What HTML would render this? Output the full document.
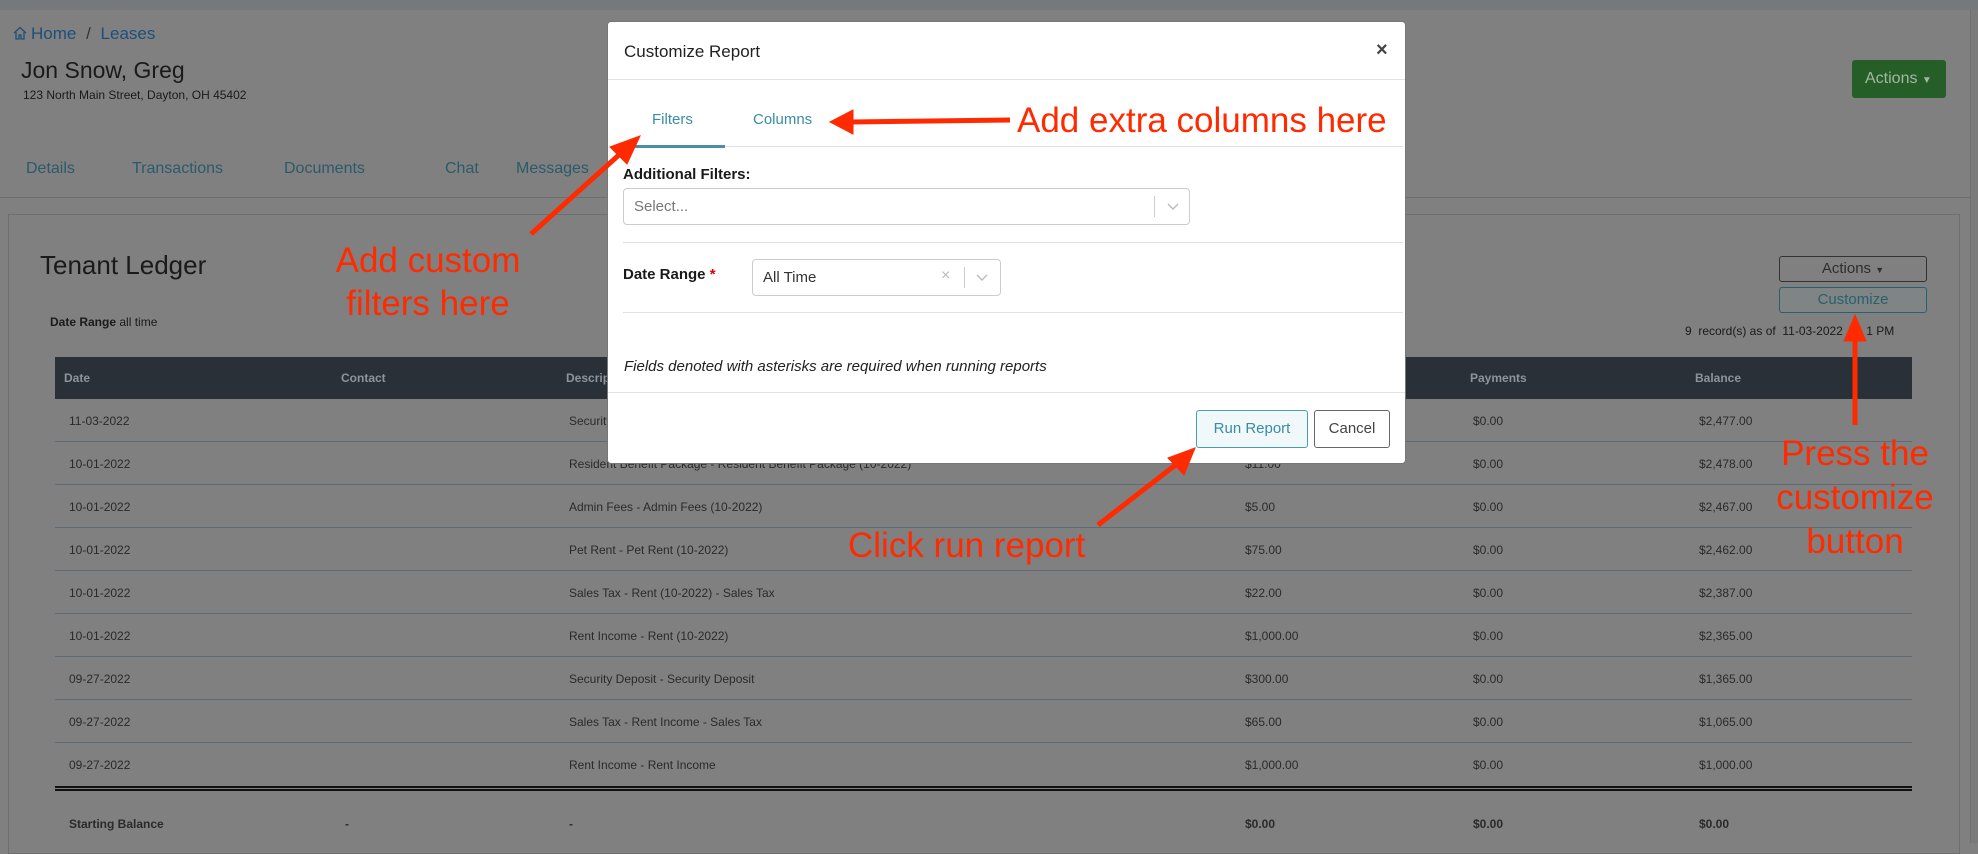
<!DOCTYPE html>
<html><head><meta charset="utf-8"><style>
*{margin:0;padding:0;box-sizing:border-box}
body{width:1978px;height:843px;overflow:hidden;background:#808080;font-family:"Liberation Sans",sans-serif;position:relative;color:#1e1e1e}
.a{position:absolute;white-space:nowrap}
.red{color:#ff2a00;font-size:35px;font-family:"Liberation Sans",sans-serif;line-height:1}
.row{position:absolute;left:55px;width:1857px;height:43px;border-bottom:1px solid #5f6b78;font-size:12px;color:#2a2a2a}
.row span{position:absolute;top:15px}
</style></head><body>
<div class="a" style="left:0;top:0;width:1978px;height:10px;background:#76797c"></div>
<div class="a" style="left:1970px;top:10px;width:8px;height:833px;background:#7a7a7a;border-left:1px solid #6f6f6f"></div>
<!-- breadcrumb -->
<svg class="a" style="left:13px;top:26px" width="14" height="14" viewBox="0 0 14 14"><path d="M1 7 L7 1.5 L13 7 M3 6 V13 H6 V9 H8 V13 H11 V6" fill="none" stroke="#1d4f7a" stroke-width="1.3"/></svg>
<div class="a" style="left:31px;top:24px;font-size:17px;color:#1d4f7a">Home <span style="color:#333;margin:0 5px">/</span> Leases</div>
<div class="a" style="left:21px;top:57px;font-size:23px;color:#1a1a1a">Jon Snow, Greg</div>
<div class="a" style="left:23px;top:88px;font-size:12px;color:#1a1a1a">123 North Main Street, Dayton, OH 45402</div>
<div class="a" style="left:1852px;top:60px;width:94px;height:38px;background:#265e28;border-radius:3px;color:#a3b8a3;font-size:16px;line-height:38px;padding-left:13px">Actions <span style="font-size:10px">▼</span></div>
<!-- tabs -->
<div class="a" style="left:26px;top:160px;font-size:16px;color:#2b5a6a">Details</div>
<div class="a" style="left:132px;top:160px;font-size:16px;color:#2b5a6a">Transactions</div>
<div class="a" style="left:284px;top:160px;font-size:16px;color:#2b5a6a">Documents</div>
<div class="a" style="left:445px;top:160px;font-size:16px;color:#2b5a6a">Chat</div>
<div class="a" style="left:516px;top:160px;font-size:16px;color:#2b5a6a">Messages</div>
<div class="a" style="left:0;top:197px;width:1970px;height:1px;background:#6e6e6e"></div>
<!-- card -->
<div class="a" style="left:8px;top:214px;width:1952px;height:640px;border:1px solid #6e6e6e"></div>
<div class="a" style="left:40px;top:250px;font-size:26px;color:#1a1a1a">Tenant Ledger</div>
<div class="a" style="left:50px;top:315px;font-size:12px;color:#1a1a1a"><b>Date Range</b> all time</div>
<div class="a" style="left:1779px;top:256px;width:148px;height:26px;border:1px solid #333;border-radius:3px;text-align:center;font-size:15px;line-height:24px;color:#2e2e2e">Actions <span style="font-size:9px">▼</span></div>
<div class="a" style="left:1779px;top:287px;width:148px;height:26px;border:1px solid #2a5f6e;border-radius:3px;text-align:center;font-size:15px;line-height:24px;color:#2a5f6e;background:#7f8485">Customize</div>
<div class="a" style="left:1685px;top:324px;font-size:12px;color:#1a1a1a">9&nbsp; record(s) as of&nbsp; 11-03-2022 &nbsp;&nbsp;&nbsp;&nbsp;&nbsp;&nbsp;1 PM</div>
<!-- table -->
<div class="a" style="left:55px;top:357px;width:1857px;height:42px;background:#2a3038;font-size:12px;font-weight:bold;color:#8d949c">
<span class="a" style="left:9px;top:14px">Date</span><span class="a" style="left:286px;top:14px">Contact</span><span class="a" style="left:511px;top:14px">Description</span><span class="a" style="left:1190px;top:14px">Charges</span><span class="a" style="left:1415px;top:14px">Payments</span><span class="a" style="left:1640px;top:14px">Balance</span></div>
<div class="row" style="top:399px"><span style="left:14px">11-03-2022</span><span style="left:514px">Security Deposit - Security Deposit</span><span style="left:1190px">$2,477.00</span><span style="left:1418px">$0.00</span><span style="left:1644px">$2,477.00</span></div>
<div class="row" style="top:442px"><span style="left:14px">10-01-2022</span><span style="left:514px">Resident Benefit Package - Resident Benefit Package (10-2022)</span><span style="left:1190px">$11.00</span><span style="left:1418px">$0.00</span><span style="left:1644px">$2,478.00</span></div>
<div class="row" style="top:485px"><span style="left:14px">10-01-2022</span><span style="left:514px">Admin Fees - Admin Fees (10-2022)</span><span style="left:1190px">$5.00</span><span style="left:1418px">$0.00</span><span style="left:1644px">$2,467.00</span></div>
<div class="row" style="top:528px"><span style="left:14px">10-01-2022</span><span style="left:514px">Pet Rent - Pet Rent (10-2022)</span><span style="left:1190px">$75.00</span><span style="left:1418px">$0.00</span><span style="left:1644px">$2,462.00</span></div>
<div class="row" style="top:571px"><span style="left:14px">10-01-2022</span><span style="left:514px">Sales Tax - Rent (10-2022) - Sales Tax</span><span style="left:1190px">$22.00</span><span style="left:1418px">$0.00</span><span style="left:1644px">$2,387.00</span></div>
<div class="row" style="top:614px"><span style="left:14px">10-01-2022</span><span style="left:514px">Rent Income - Rent (10-2022)</span><span style="left:1190px">$1,000.00</span><span style="left:1418px">$0.00</span><span style="left:1644px">$2,365.00</span></div>
<div class="row" style="top:657px"><span style="left:14px">09-27-2022</span><span style="left:514px">Security Deposit - Security Deposit</span><span style="left:1190px">$300.00</span><span style="left:1418px">$0.00</span><span style="left:1644px">$1,365.00</span></div>
<div class="row" style="top:700px"><span style="left:14px">09-27-2022</span><span style="left:514px">Sales Tax - Rent Income - Sales Tax</span><span style="left:1190px">$65.00</span><span style="left:1418px">$0.00</span><span style="left:1644px">$1,065.00</span></div>
<div class="row" style="top:743px;border-bottom:none"><span style="left:14px">09-27-2022</span><span style="left:514px">Rent Income - Rent Income</span><span style="left:1190px">$1,000.00</span><span style="left:1418px">$0.00</span><span style="left:1644px">$1,000.00</span></div>
<div class="a" style="left:55px;top:786px;width:1857px;height:5px;border-top:2px solid #111;border-bottom:2px solid #111"></div>
<div class="a" style="left:55px;top:817px;width:1857px;font-size:12px;font-weight:bold;color:#2a2a2a">
<span class="a" style="left:14px">Starting Balance</span><span class="a" style="left:290px">-</span><span class="a" style="left:514px">-</span><span class="a" style="left:1190px">$0.00</span><span class="a" style="left:1418px">$0.00</span><span class="a" style="left:1644px">$0.00</span></div>
<!-- modal -->
<div class="a" style="left:607px;top:21px;width:799px;height:443px;background:#fff;border-radius:4px;border:1px solid #777">
<div class="a" style="left:16px;top:20px;font-size:17px;color:#222">Customize Report</div>
<div class="a" style="left:768px;top:17px;font-size:20px;font-weight:bold;color:#444">×</div>
<div class="a" style="left:0;top:57px;width:797px;height:1px;background:#e2e2e2"></div>
<div class="a" style="left:44px;top:89px;font-size:15px;color:#3a8ca5">Filters</div>
<div class="a" style="left:145px;top:89px;font-size:15px;color:#3a8ca5">Columns</div>
<div class="a" style="left:15px;top:124px;width:780px;height:1px;background:#e2e2e2"></div>
<div class="a" style="left:15px;top:123px;width:102px;height:3px;background:#4a8ea8"></div>
<div class="a" style="left:15px;top:144px;font-size:15px;font-weight:bold;color:#1a1a1a">Additional Filters:</div>
<div class="a" style="left:15px;top:166px;width:567px;height:37px;border:1px solid #ccc;border-radius:4px">
<span class="a" style="left:10px;top:9px;font-size:15px;color:#777">Select...</span>
<span class="a" style="left:530px;top:7px;width:1px;height:21px;background:#ccc"></span>
<svg class="a" style="left:543px;top:13px" width="12" height="9"><path d="M1 2 L6 7 L11 2" fill="none" stroke="#bbb" stroke-width="1.4"/></svg></div>
<div class="a" style="left:15px;top:220px;width:780px;height:1px;background:#e2e2e2"></div>
<div class="a" style="left:15px;top:244px;font-size:15px;font-weight:bold;color:#1a1a1a">Date Range <span style="color:#d00">*</span></div>
<div class="a" style="left:144px;top:237px;width:249px;height:37px;border:1px solid #ccc;border-radius:4px">
<span class="a" style="left:10px;top:9px;font-size:15px;color:#333">All Time</span>
<span class="a" style="left:188px;top:7px;font-size:16px;color:#bbb">×</span>
<span class="a" style="left:211px;top:7px;width:1px;height:21px;background:#ccc"></span>
<svg class="a" style="left:223px;top:13px" width="12" height="9"><path d="M1 2 L6 7 L11 2" fill="none" stroke="#bbb" stroke-width="1.4"/></svg></div>
<div class="a" style="left:15px;top:290px;width:780px;height:1px;background:#e2e2e2"></div>
<div class="a" style="left:16px;top:336px;font-size:15px;font-style:italic;color:#222">Fields denoted with asterisks are required when running reports</div>
<div class="a" style="left:0;top:370px;width:797px;height:1px;background:#e2e2e2"></div>
<div class="a" style="left:588px;top:388px;height:38px;border:1px solid #4a9bb5;border-radius:3px;background:#f0f8fa;color:#3a8ca5;font-size:15px;line-height:36px;text-align:center;width:112px">Run Report</div>
<div class="a" style="left:706px;top:388px;width:76px;height:38px;border:1px solid #666;border-radius:3px;color:#444;font-size:15px;line-height:36px;text-align:center">Cancel</div>
</div>
<!-- annotations -->
<div class="a red" style="left:333px;top:239px;width:190px;text-align:center;line-height:43px">Add custom<br>filters here</div>
<div class="a red" style="left:1017px;top:103px">Add extra columns here</div>
<div class="a red" style="left:848px;top:528px">Click run report</div>
<div class="a red" style="left:1775px;top:432px;width:160px;text-align:center;line-height:44px">Press the<br>customize<br>button</div>
<svg class="a" style="left:0;top:0" width="1978" height="843">
<g stroke="#ff2a00" stroke-width="5" fill="#ff2a00">
<line x1="531" y1="234" x2="620" y2="154"/><polygon points="640,136 610,147 627,164" stroke-width="1"/>
<line x1="1010" y1="120" x2="850" y2="122"/><polygon points="830,122 853,110 853,134" stroke-width="1"/>
<line x1="1098" y1="525" x2="1178" y2="463"/><polygon points="1195,448 1168,458 1184,475" stroke-width="1"/>
<line x1="1855" y1="425" x2="1855" y2="335"/><polygon points="1855,315 1844,341 1866,341" stroke-width="1"/>
</g></svg>
</body></html>
